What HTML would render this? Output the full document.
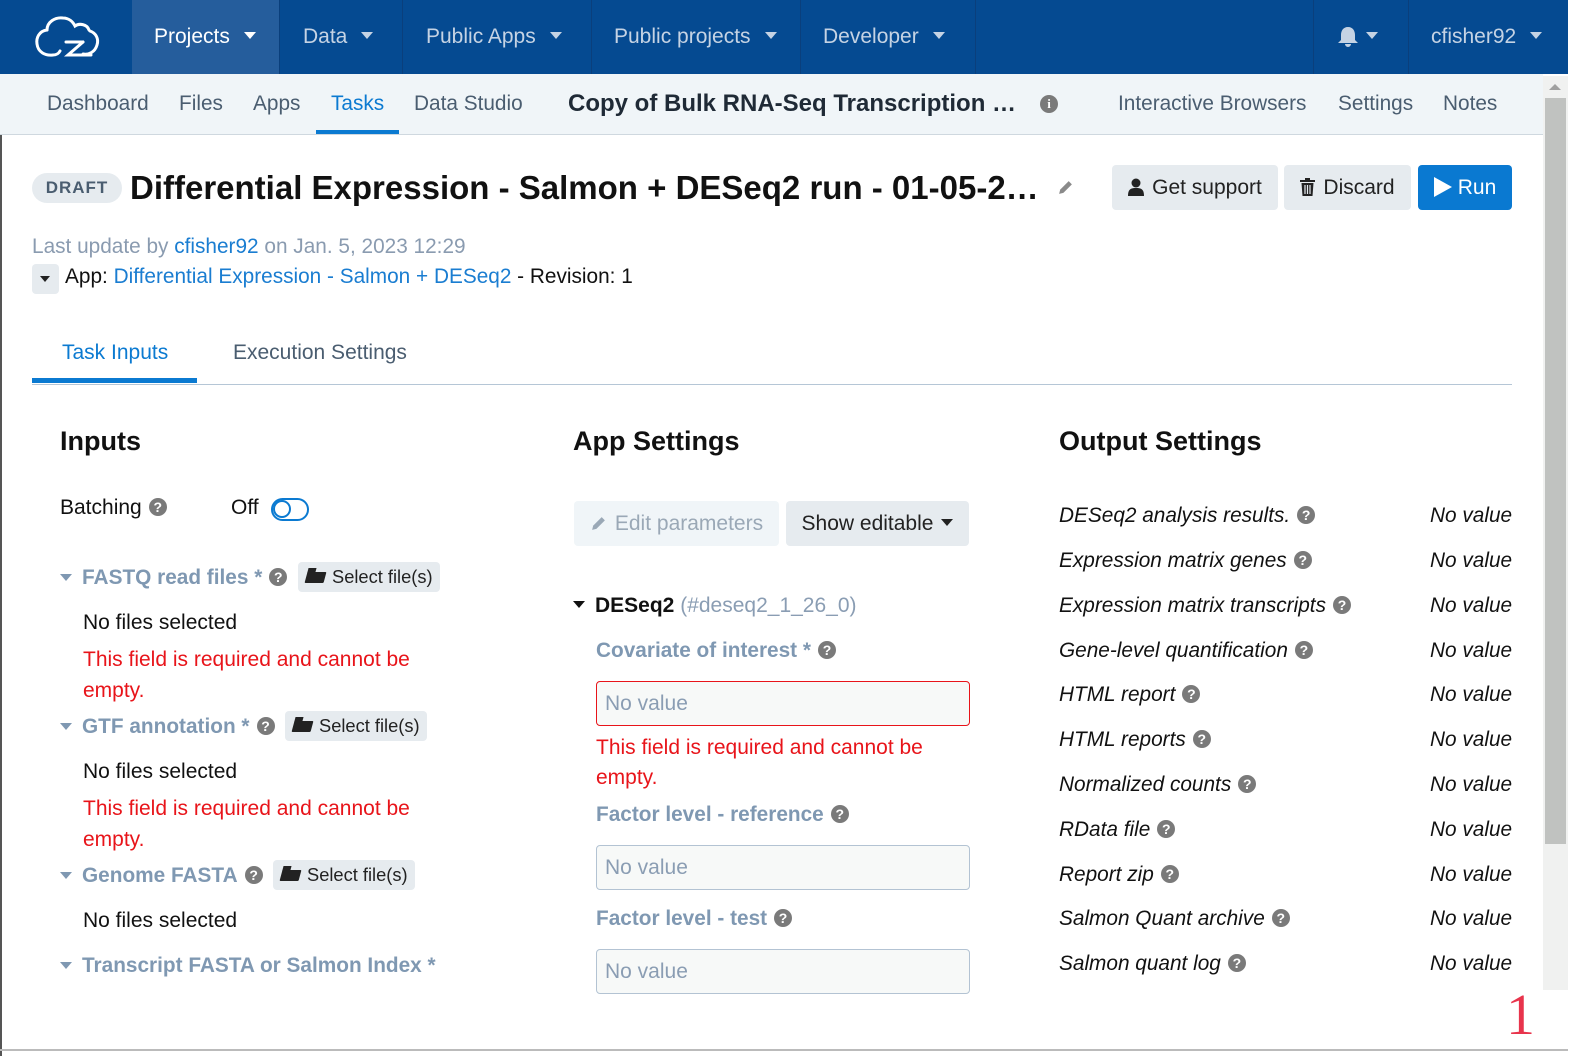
<!DOCTYPE html>
<html><head><meta charset="utf-8">
<style>
*{margin:0;padding:0;box-sizing:border-box}
body{width:1575px;height:1056px;overflow:hidden;background:#fff;font-family:"Liberation Sans",Arial,sans-serif;position:relative;color:#111}
.a{position:absolute;white-space:nowrap;line-height:24px}
.nav{position:absolute;left:0;top:0;width:1568px;height:74px;background:#054a91}
.nv{color:#c5d3e4;font-size:21px;top:25px}
.sep{position:absolute;top:0;width:1px;height:74px;background:#0a3f7c}
.car{display:inline-block;width:0;height:0;border-left:6px solid transparent;border-right:6px solid transparent;border-top:7px solid #c5d3e4;vertical-align:middle;margin-left:14px;margin-top:-3px}
.sub{position:absolute;left:0;top:74px;width:1543px;height:61px;background:#f0f5f8;border-bottom:1px solid #cfd8df}
.sn{color:#4a5d70;font-size:20.8px;top:92px}
.q{display:inline-block;width:18px;height:18px;border-radius:50%;background:#7a7a7a;color:#fff;font-size:14px;font-weight:bold;line-height:18px;text-align:center;font-style:normal;vertical-align:middle;margin-left:7px;margin-top:-3px}
.btn{position:absolute;border-radius:4px;font-size:21px;line-height:45px;text-align:center;color:#222}
.h2{font-size:27px;font-weight:bold;color:#111}
.lbl{font-size:20.8px;font-weight:bold;color:#7f98b2}
.tri{display:inline-block;width:0;height:0;border-left:6px solid transparent;border-right:6px solid transparent;border-top:7px solid #7f98b2;vertical-align:middle;margin-right:10px;margin-top:-3px}
.sel{position:absolute;background:#e6ebef;border-radius:4px;height:30px;font-size:18.3px;line-height:30px;color:#222;padding-left:34px}
.fold{position:absolute;left:8px;top:10px;width:19px;height:11px;background:#222;border-radius:1px;transform:skewX(-15deg)}
.fold:before{content:"";position:absolute;left:0;top:-4px;width:8px;height:5px;background:#222}
.err{font-size:21px;color:#e8141a}
.t20{font-size:21px;color:#111}
.inp{position:absolute;left:596px;width:374px;height:45px;border:1px solid #b3c3d3;border-radius:4px;background:#f7f9f8;font-size:21px;color:#8a9db3;padding-left:8px;line-height:43px}
.out{font-size:20.8px;font-style:italic;color:#111}
.q2{display:inline-block;width:18px;height:18px;border-radius:50%;background:#7a7a7a;color:#fff;font-size:14px;font-weight:bold;line-height:18px;text-align:center;font-style:normal;vertical-align:middle;margin-left:7px;margin-top:-3px}
</style></head><body>
<div style="position:absolute;left:0;top:0;width:2px;height:1056px;background:#555"></div>
<div class="nav"></div>
<svg style="position:absolute;left:33px;top:14px" width="70" height="46" viewBox="0 0 70 46" fill="none" stroke="#fff" stroke-width="3" stroke-linecap="round">
<path d="M14 16 C14 8 22 3 30 4 C36 4 40 8 42 12 C46 9 54 10 56 16"/>
<path d="M14 16 C6 17 3 24 4 30 C5 38 12 42 20 41 C24 41 26 39 27 37"/>
<path d="M57 17 C63 19 66 25 64 31 C62 38 56 41 50 40"/>
<path d="M33 28 L50 28"/><path d="M50 28 L35 41 L58 41"/>
</svg>
<div style="position:absolute;left:132px;top:0;width:147px;height:74px;background:#255d9c"></div>
<div class="sep" style="left:279px"></div><div class="sep" style="left:402px"></div><div class="sep" style="left:591px"></div><div class="sep" style="left:800px"></div><div class="sep" style="left:975px"></div><div class="sep" style="left:1313px"></div><div class="sep" style="left:1408px"></div>
<div class="a nv" style="left:154px;color:#fff">Projects<span class="car" style="border-top-color:#fff"></span></div>
<div class="a nv" style="left:303px">Data<span class="car"></span></div>
<div class="a nv" style="left:426px">Public Apps<span class="car"></span></div>
<div class="a nv" style="left:614px">Public projects<span class="car"></span></div>
<div class="a nv" style="left:823px">Developer<span class="car"></span></div>
<svg style="position:absolute;left:1337px;top:26px" width="22" height="22" viewBox="0 0 22 22"><path d="M11 1 C6 1 4 5 4 9 L4 14 L1 17 L21 17 L18 14 L18 9 C18 5 16 1 11 1Z M8 18 A3 3 0 0 0 14 18Z" fill="#c5d3e4"/></svg>
<div class="a nv" style="left:1360px"><span class="car" style="margin-left:6px"></span></div>
<div class="a nv" style="left:1431px">cfisher92<span class="car"></span></div>
<div style="position:absolute;left:1568px;top:0;width:7px;height:1056px;background:#fff"></div>

<div class="sub"></div>
<div class="a sn" style="left:47px">Dashboard</div>
<div class="a sn" style="left:179px">Files</div>
<div class="a sn" style="left:253px">Apps</div>
<div class="a sn" style="left:331px;color:#0b7ad1">Tasks</div>
<div style="position:absolute;left:316px;top:130px;width:83px;height:4px;background:#0b7ad1"></div>
<div class="a sn" style="left:414px">Data Studio</div>
<div class="a" style="left:568px;top:92px;font-size:24px;font-weight:bold;color:#1f2a36">Copy of Bulk RNA-Seq Transcription …</div>
<div class="a" style="left:1040px;top:95px;width:18px;height:18px;border-radius:50%;background:#7a7a7a;color:#fff;font-size:13px;font-weight:bold;line-height:18px;text-align:center;font-family:'Liberation Serif',serif">i</div>
<div class="a sn" style="left:1118px">Interactive Browsers</div>
<div class="a sn" style="left:1338px">Settings</div>
<div class="a sn" style="left:1443px">Notes</div>

<div style="position:absolute;left:1543px;top:76px;width:25px;height:914px;background:#f0f1f0"></div>
<div style="position:absolute;left:1545px;top:98px;width:21px;height:746px;background:#c0c2c0"></div>
<div style="position:absolute;left:1549px;top:84px;width:0;height:0;border-left:6px solid transparent;border-right:6px solid transparent;border-bottom:6px solid #a0a0a0"></div>
<div class="a" style="left:1506px;top:985px;font-size:58px;line-height:60px;color:#e8344c;font-family:'Liberation Serif',serif">1</div>

<div class="a" style="left:32px;top:173px;width:90px;height:30px;border-radius:15px;background:#e6ebef;color:#4a5d70;font-weight:bold;font-size:17px;line-height:30px;text-align:center;letter-spacing:1px">DRAFT</div>
<div class="a" style="left:130px;top:168px;font-size:33px;line-height:40px;font-weight:bold;color:#111">Differential Expression - Salmon + DESeq2 run - 01-05-2…</div>
<svg style="position:absolute;left:1057px;top:179px" width="17" height="17" viewBox="0 0 16 16"><path d="M2 14 L3 10 L11 2 L14 5 L6 13Z" fill="#8a8a8a"/></svg>
<div class="btn" style="left:1112px;top:165px;width:166px;background:#e6ebef"><svg width="16" height="18" viewBox="0 0 16 18" style="vertical-align:-2px;margin-right:8px"><circle cx="8" cy="5" r="4.5" fill="#222"/><path d="M0 18 C0 11 3 10 8 10 C13 10 16 11 16 18Z" fill="#222"/></svg>Get support</div>
<div class="btn" style="left:1284px;top:165px;width:127px;background:#e6ebef"><svg width="15" height="18" viewBox="0 0 15 18" style="vertical-align:-2px;margin-right:8px"><path d="M0 2 H15 V4 H0Z M5 0 H10 V2 H5Z M1.5 5 H13.5 L12.5 18 H2.5Z" fill="#222"/><path d="M5 7 V16 M7.5 7 V16 M10 7 V16" stroke="#e6ebef" stroke-width="1.2"/></svg>Discard</div>
<div class="btn" style="left:1418px;top:165px;width:94px;background:#0a79d1;color:#fff"><svg width="18" height="20" viewBox="0 0 18 20" style="vertical-align:-3px;margin-right:6px"><path d="M0 0 L18 10 L0 20Z" fill="#fff"/></svg>Run</div>

<div class="a" style="left:32px;top:235px;font-size:20.8px;color:#8a9bb0">Last update by <span style="color:#1a7dd1">cfisher92</span> on Jan. 5, 2023 12:29</div>
<div style="position:absolute;left:32px;top:264px;width:27px;height:30px;border-radius:4px;background:#e6ebef"><span style="position:absolute;left:8px;top:12px;border-left:5px solid transparent;border-right:5px solid transparent;border-top:6px solid #222"></span></div>
<div class="a" style="left:65px;top:265px;font-size:20.8px;color:#111">App: <span style="color:#1a7dd1">Differential Expression - Salmon + DESeq2</span> - Revision: 1</div>

<div class="a" style="left:62px;top:341px;font-size:21px;color:#0b7ad1">Task Inputs</div>
<div class="a" style="left:233px;top:341px;font-size:21px;color:#4a5d70">Execution Settings</div>
<div style="position:absolute;left:32px;top:384px;width:1480px;height:1px;background:#b5c6d6"></div>
<div style="position:absolute;left:32px;top:378px;width:165px;height:5px;background:#0b7ad1"></div>

<div class="a h2" style="left:60px;top:429px">Inputs</div>
<div class="a h2" style="left:573px;top:429px">App Settings</div>
<div class="a h2" style="left:1059px;top:429px">Output Settings</div>

<div class="a t20" style="left:60px;top:496px">Batching<span class="q">?</span></div>
<div class="a t20" style="left:231px;top:496px">Off</div>
<div style="position:absolute;left:271px;top:498px;width:38px;height:23px;border:2.5px solid #0b7ad1;border-radius:12px"><div style="position:absolute;left:0;top:0;width:18px;height:18px;border:2.5px solid #0b7ad1;border-radius:50%;margin:-0.5px"></div></div>

<div class="a lbl" style="left:60px;top:566px"><span class="tri"></span>FASTQ read files *<span class="q">?</span></div>
<div class="sel" style="left:298px;top:562px;width:142px"><div class="fold"></div>Select file(s)</div>
<div class="a t20" style="left:83px;top:611px">No files selected</div>
<div class="a err" style="left:83px;top:648px">This field is required and cannot be</div>
<div class="a err" style="left:83px;top:679px">empty.</div>

<div class="a lbl" style="left:60px;top:715px"><span class="tri"></span>GTF annotation *<span class="q">?</span></div>
<div class="sel" style="left:285px;top:711px;width:142px"><div class="fold"></div>Select file(s)</div>
<div class="a t20" style="left:83px;top:760px">No files selected</div>
<div class="a err" style="left:83px;top:797px">This field is required and cannot be</div>
<div class="a err" style="left:83px;top:828px">empty.</div>

<div class="a lbl" style="left:60px;top:864px"><span class="tri"></span>Genome FASTA<span class="q">?</span></div>
<div class="sel" style="left:273px;top:860px;width:142px"><div class="fold"></div>Select file(s)</div>
<div class="a t20" style="left:83px;top:909px">No files selected</div>
<div class="a lbl" style="left:60px;top:954px"><span class="tri"></span>Transcript FASTA or Salmon Index *</div>

<div class="btn" style="left:574px;top:501px;width:205px;background:#f0f5f8;color:#9aa8b6"><svg width="17" height="17" viewBox="0 0 16 16" style="vertical-align:-2px;margin-right:8px"><path d="M2 14 L3 10 L11 2 L14 5 L6 13Z" fill="#9aa8b6"/></svg>Edit parameters</div>
<div class="btn" style="left:786px;top:501px;width:183px;background:#e6ebef">Show editable<span class="car" style="border-top-color:#222;margin-left:8px"></span></div>

<div class="a" style="left:573px;top:594px;font-size:21px;font-weight:bold;color:#111"><span class="tri" style="border-top-color:#111"></span>DESeq2 <span style="font-weight:normal;color:#8a9db3">(#deseq2_1_26_0)</span></div>
<div class="a lbl" style="left:596px;top:639px">Covariate of interest *<span class="q">?</span></div>
<div class="inp" style="top:681px;border-color:#e8141a">No value</div>
<div class="a err" style="left:596px;top:736px">This field is required and cannot be</div>
<div class="a err" style="left:596px;top:766px">empty.</div>
<div class="a lbl" style="left:596px;top:803px">Factor level - reference<span class="q">?</span></div>
<div class="inp" style="top:845px">No value</div>
<div class="a lbl" style="left:596px;top:907px">Factor level - test<span class="q">?</span></div>
<div class="inp" style="top:949px">No value</div>

<div class="a out" style="left:1059px;top:504px">DESeq2 analysis results.<span class="q2">?</span></div>
<div class="a out" style="left:1059px;top:549px">Expression matrix genes<span class="q2">?</span></div>
<div class="a out" style="left:1059px;top:594px">Expression matrix transcripts<span class="q2">?</span></div>
<div class="a out" style="left:1059px;top:639px">Gene-level quantification<span class="q2">?</span></div>
<div class="a out" style="left:1059px;top:683px">HTML report<span class="q2">?</span></div>
<div class="a out" style="left:1059px;top:728px">HTML reports<span class="q2">?</span></div>
<div class="a out" style="left:1059px;top:773px">Normalized counts<span class="q2">?</span></div>
<div class="a out" style="left:1059px;top:818px">RData file<span class="q2">?</span></div>
<div class="a out" style="left:1059px;top:863px">Report zip<span class="q2">?</span></div>
<div class="a out" style="left:1059px;top:907px">Salmon Quant archive<span class="q2">?</span></div>
<div class="a out" style="left:1059px;top:952px">Salmon quant log<span class="q2">?</span></div>
<div class="a out" style="left:1430px;top:504px">No value</div>
<div class="a out" style="left:1430px;top:549px">No value</div>
<div class="a out" style="left:1430px;top:594px">No value</div>
<div class="a out" style="left:1430px;top:639px">No value</div>
<div class="a out" style="left:1430px;top:683px">No value</div>
<div class="a out" style="left:1430px;top:728px">No value</div>
<div class="a out" style="left:1430px;top:773px">No value</div>
<div class="a out" style="left:1430px;top:818px">No value</div>
<div class="a out" style="left:1430px;top:863px">No value</div>
<div class="a out" style="left:1430px;top:907px">No value</div>
<div class="a out" style="left:1430px;top:952px">No value</div>
<div style="position:absolute;left:0;top:1049px;width:1568px;height:2px;background:#bbb"></div>
</body></html>
